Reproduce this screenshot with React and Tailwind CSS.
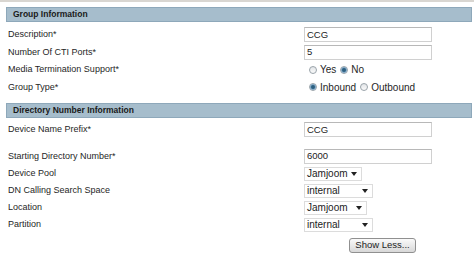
import React from "react";

const Row = ({ label, children, h = "h-[17.5px]" }) => (
  <div className={`flex items-center ${h}`}>
    <div className="w-[298px] pl-[2px]">{label}</div>
    <div className="flex items-center">{children}</div>
  </div>
);

const Header = ({ title, className = "" }) => (
  <div
    className={`h-[15px] bg-[#a6bdcc] border border-[#8ea8ba] flex items-center pl-[6px] font-bold text-[8.5px] text-[#1a1a1a] ${className}`}
  >
    {title}
  </div>
);

const TextBox = ({ value }) => (
  <div className="w-[128px] h-[15px] border border-[#d0d0d0] border-t-[#b8b8b8] bg-white flex items-center px-[2px] text-[9.5px] text-[#222]">
    {value}
  </div>
);

const Radio = ({ checked, label }) => (
  <span className="flex items-center mr-[4px] text-[10px]">
    <span className="w-[8px] h-[8px] rounded-full border border-[#9aa3aa] bg-gradient-to-b from-[#e2e5e8] to-[#fafafa] flex items-center justify-center mr-[3px]">
      {checked && <span className="w-[4px] h-[4px] rounded-full bg-[#2c5f80] ring-1 ring-[#7fa6c4]" />}
    </span>
    {label}
  </span>
);

const Select = ({ value, w }) => (
  <div
    className={`${w} h-[14px] border border-[#dcdcdc] bg-white flex items-center justify-between pl-[2px] pr-[4px] text-[10px] text-[#222]`}
  >
    <span>{value}</span>
    <svg width="6" height="4" viewBox="0 0 6 4">
      <path d="M0 0 L6 0 L3 4 Z" fill="#222" />
    </svg>
  </div>
);

export default function App() {
  return (
    <div
      className="w-[474px] h-[263px] bg-white text-[9px] text-[#262626] overflow-hidden"
      style={{ fontFamily: '"Liberation Sans", Arial, sans-serif' }}
    >
      <div className="h-[2px] bg-[#d9d6d1]" />
      <div className="pl-[6px] pr-[2px]">
        <Header title="Group Information" className="mt-[5px]" />
        <div className="mt-[4px]">
          <Row label="Description*">
            <TextBox value="CCG" />
          </Row>
          <Row label="Number Of CTI Ports*">
            <TextBox value="5" />
          </Row>
          <Row label="Media Termination Support*">
            <span className="pl-[5px] flex items-center">
              <Radio label="Yes" />
              <Radio checked label="No" />
            </span>
          </Row>
          <Row label="Group Type*">
            <span className="pl-[5px] flex items-center">
              <Radio checked label="Inbound" />
              <Radio label="Outbound" />
            </span>
          </Row>
        </div>

        <Header title="Directory Number Information" className="mt-[7px]" />
        <div className="mt-[3px]">
          <Row label="Device Name Prefix*">
            <TextBox value="CCG" />
          </Row>
          <div className="h-[9px]" />
          <Row label="Starting Directory Number*">
            <TextBox value="6000" />
          </Row>
          <Row label="Device Pool" h="h-[17px]">
            <Select value="Jamjoom" w="w-[58px]" />
          </Row>
          <Row label="DN Calling Search Space" h="h-[17px]">
            <Select value="internal" w="w-[69px]" />
          </Row>
          <Row label="Location" h="h-[17px]">
            <Select value="Jamjoom" w="w-[63px]" />
          </Row>
          <Row label="Partition" h="h-[17px]">
            <Select value="internal" w="w-[69px]" />
          </Row>
          <div className="flex pl-[343px] mt-[5px]">
            <button className="w-[67px] h-[15px] border border-[#909090] rounded-[3px] bg-gradient-to-b from-[#fafafa] to-[#d8d8d8] text-[9.5px] text-[#222] flex items-center justify-center">
              Show Less...
            </button>
          </div>
        </div>
      </div>
    </div>
  );
}
